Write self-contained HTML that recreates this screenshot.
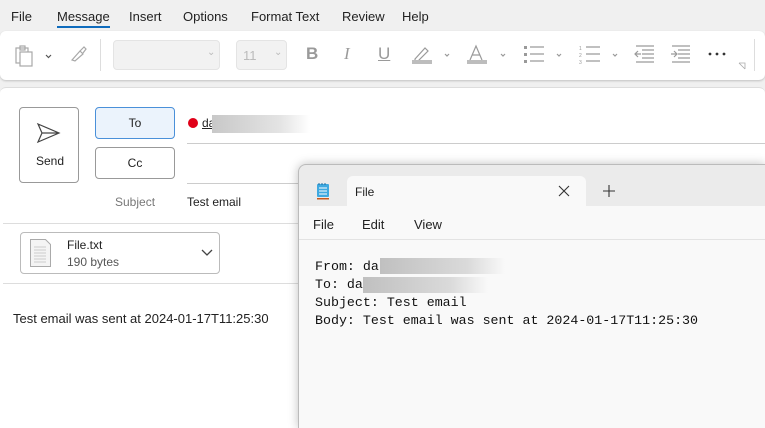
<!DOCTYPE html>
<html style="overflow:hidden"><head><style>
*{margin:0;padding:0;box-sizing:border-box}
html,body{width:765px;height:428px;overflow:hidden}
body{background:#f0f0f0;font-family:"Liberation Sans",sans-serif;position:relative;color:#222}
.a{position:absolute}
.menu span{position:absolute;top:9px;font-size:13px;color:#222}
.ic{position:absolute;color:#9a9a9a}
</style></head><body>
<div class="menu">
<span style="left:11px">File</span>
<span style="left:57px">Message</span>
<span style="left:129px">Insert</span>
<span style="left:183px">Options</span>
<span style="left:251px">Format Text</span>
<span style="left:342px">Review</span>
<span style="left:402px">Help</span>
</div>
<div class="a" style="left:57px;top:26px;width:53px;height:2px;background:#0f6cbd"></div>
<div class="a" style="left:0;top:31px;width:765px;height:49px;background:#fff;border-radius:6px;box-shadow:0 1px 2px rgba(0,0,0,.2)"></div>
<svg class="a" style="left:10px;top:40px" width="100" height="30" viewBox="0 0 100 30">
<g fill="none" stroke="#a8a8a8" stroke-width="1.2">
<rect x="6" y="8" width="12" height="15"/><rect x="10" y="12" width="12" height="14" fill="#fff"/><rect x="10" y="6" width="5" height="4"/>
<path d="M36 15l2.5 2.5 2.5-2.5" stroke="#555"/>
<path d="M62 20l8-9 3 3-8 7z M70 11l4-4 2 2-3 4"/>
</g></svg>
<div class="a" style="left:100px;top:39px;width:1px;height:32px;background:#ddd"></div>
<div class="a" style="left:113px;top:40px;width:107px;height:30px;background:#f2f2f2;border:1px solid #e4e4e4;border-radius:4px"></div>
<div class="a" style="left:236px;top:40px;width:51px;height:30px;background:#f2f2f2;border:1px solid #e4e4e4;border-radius:4px"></div>
<div class="ic" style="left:243px;top:48px;font-size:13px;color:#bbb">11</div>
<div class="ic" style="left:207px;top:47px;font-size:10px;color:#bbb">⌄</div>
<div class="ic" style="left:274px;top:47px;font-size:10px;color:#bbb">⌄</div>
<div class="ic" style="left:306px;top:44px;font-size:17px;font-weight:bold">B</div>
<div class="ic" style="left:344px;top:44px;font-size:17px;font-family:'Liberation Serif';font-style:italic">I</div>
<div class="ic" style="left:378px;top:44px;font-size:17px;text-decoration:underline">U</div>
<svg class="a" style="left:408px;top:40px" width="340" height="34" viewBox="0 0 340 34">
<g fill="none" stroke="#9a9a9a" stroke-width="1.2">
<path d="M7 19l10-11 3 3-10 10h-3z"/>
<path d="M37 14l2 2 2-2M93 14l2 2 2-2M149 14l2 2 2-2M205 14l2 2 2-2"/>
<path d="M62 20l6-14 6 14M64 15h8"/>
<path d="M122 7h14M122 14h14M122 21h14M178 7h14M178 14h14M178 21h14"/>
<path d="M228 6h18M234 10h12M234 14h12M234 18h12M228 22h18M233 14h-6M230 11l-3 3 3 3"/>
<path d="M264 6h18M270 10h12M270 14h12M270 18h12M264 22h18M263 14h6M266 11l3 3-3 3"/>
</g>
<rect x="4" y="20" width="20" height="4" fill="#bdbdbd"/><rect x="59" y="20" width="20" height="4" fill="#bdbdbd"/>
<g fill="#9a9a9a"><rect x="116" y="6" width="3" height="3"/><rect x="116" y="13" width="3" height="3"/><rect x="116" y="20" width="3" height="3"/></g>
<text x="171" y="10" font-size="5" fill="#999">1</text><text x="171" y="17" font-size="5" fill="#999">2</text><text x="171" y="24" font-size="5" fill="#999">3</text>
<g fill="#333"><circle cx="302" cy="14" r="1.4"/><circle cx="309" cy="14" r="1.4"/><circle cx="316" cy="14" r="1.4"/></g>
<path d="M331 23h6v6M331 23l6 6" stroke="#aaa" fill="none" stroke-width=".8"/>
</svg>
<div class="a" style="left:754px;top:39px;width:1px;height:32px;background:#ddd"></div>
<div class="a" style="left:0;top:87px;width:765px;height:341px;background:#fff;border-top:1px solid #ddd;border-radius:6px 6px 0 0"></div>
<div class="a" style="left:19px;top:107px;width:60px;height:76px;border:1px solid #999;border-radius:4px;background:#fff"></div>
<svg class="a" style="left:36px;top:121px" width="26" height="24" viewBox="0 0 26 24"><path d="M2 3l21 9-21 9 4-9zM6 12h17" fill="none" stroke="#444" stroke-width="1.2"/></svg>
<div class="a" style="left:36px;top:154px;font-size:12px">Send</div>
<div class="a" style="left:95px;top:107px;width:80px;height:32px;border:1px solid #4a90d9;border-radius:4px;background:#ebf3fc;text-align:center;line-height:30px;font-size:12px">To</div>
<div class="a" style="left:95px;top:147px;width:80px;height:32px;border:1px solid #999;border-radius:4px;background:#fff;text-align:center;line-height:30px;font-size:12px">Cc</div>
<div class="a" style="left:188px;top:118px;width:10px;height:10px;border-radius:50%;background:#e00018"></div>
<div class="a" style="left:202px;top:116px;font-size:12px;text-decoration:underline">da</div>
<div class="a" style="left:212px;top:115px;width:98px;height:18px;background:linear-gradient(90deg,#c8c8c8,#e4e4e4 70%,#fff)"></div>
<div class="a" style="left:187px;top:143px;width:578px;height:1px;background:#ccc"></div>
<div class="a" style="left:187px;top:183px;width:578px;height:1px;background:#ccc"></div>
<div class="a" style="left:115px;top:195px;font-size:12px;color:#777">Subject</div>
<div class="a" style="left:187px;top:195px;font-size:12px">Test email</div>
<div class="a" style="left:3px;top:223px;width:762px;height:1px;background:#ddd"></div>
<div class="a" style="left:20px;top:232px;width:200px;height:42px;border:1px solid #bbb;border-radius:4px"></div>
<svg class="a" style="left:29px;top:238px" width="24" height="30" viewBox="0 0 24 30"><path d="M1.5 1.5h15l5 5v22h-20z" fill="#f4f4f4" stroke="#aaa"/><path d="M5 9h12M5 12h12M5 15h12M5 18h12M5 21h12M5 24h12" stroke="#ccc"/></svg>
<div class="a" style="left:67px;top:238px;font-size:12px">File.txt</div>
<div class="a" style="left:67px;top:255px;font-size:12px;color:#555">190 bytes</div>
<svg class="a" style="left:201px;top:248px" width="12" height="10"><path d="M1 2l5 5 5-5" fill="none" stroke="#444" stroke-width="1.3"/></svg>
<div class="a" style="left:3px;top:283px;width:762px;height:1px;background:#ddd"></div>
<div class="a" style="left:13px;top:311px;font-size:13px">Test email was sent at 2024-01-17T11:25:30</div>
<div class="a" style="left:298px;top:164px;width:467px;height:264px;background:#ebebeb;border:1px solid #bbb;border-right:none;border-bottom:none;border-radius:8px 0 0 0;box-shadow:0 0 10px rgba(0,0,0,.25)"></div>
<div class="a" style="left:347px;top:176px;width:239px;height:31px;background:#f9f9f9;border-radius:6px 6px 0 0"></div>
<svg class="a" style="left:316px;top:182px" width="14" height="18" viewBox="0 0 14 18"><rect x="1" y="2" width="12" height="13" fill="#3fa9e0" rx="1"/><path d="M3 6h8M3 9h8M3 12h8" stroke="#fff"/><path d="M3 1v2M6 1v2M9 1v2" stroke="#1d6fa5"/><rect x="1" y="16" width="12" height="1.5" fill="#c8581e"/></svg>
<div class="a" style="left:355px;top:185px;font-size:12px">File</div>
<svg class="a" style="left:558px;top:185px" width="12" height="12"><path d="M1 1l10 10M11 1l-10 10" stroke="#333" stroke-width="1.1"/></svg>
<svg class="a" style="left:603px;top:185px" width="12" height="12"><path d="M6 0v12M0 6h12" stroke="#333" stroke-width="1.1"/></svg>
<div class="a" style="left:299px;top:206px;width:466px;height:222px;background:#f9f9f9"></div>
<div class="a" style="left:299px;top:239px;width:466px;height:1px;background:#e3e3e3"></div>
<div class="a" style="left:313px;top:217px;font-size:13px">File</div>
<div class="a" style="left:362px;top:217px;font-size:13px">Edit</div>
<div class="a" style="left:414px;top:217px;font-size:13px">View</div>
<div class="a" style="left:315px;top:258px;font-family:'Liberation Mono',monospace;font-size:13.3px;line-height:18px;color:#111;white-space:pre">From: da
To: da
Subject: Test email
Body: Test email was sent at 2024-01-17T11:25:30</div>
<div class="a" style="left:380px;top:258px;width:125px;height:16px;background:linear-gradient(90deg,#c0c0c0,#dadada 70%,#f9f9f9)"></div>
<div class="a" style="left:363px;top:277px;width:125px;height:16px;background:linear-gradient(90deg,#c0c0c0,#dadada 70%,#f9f9f9)"></div>
</body></html>
